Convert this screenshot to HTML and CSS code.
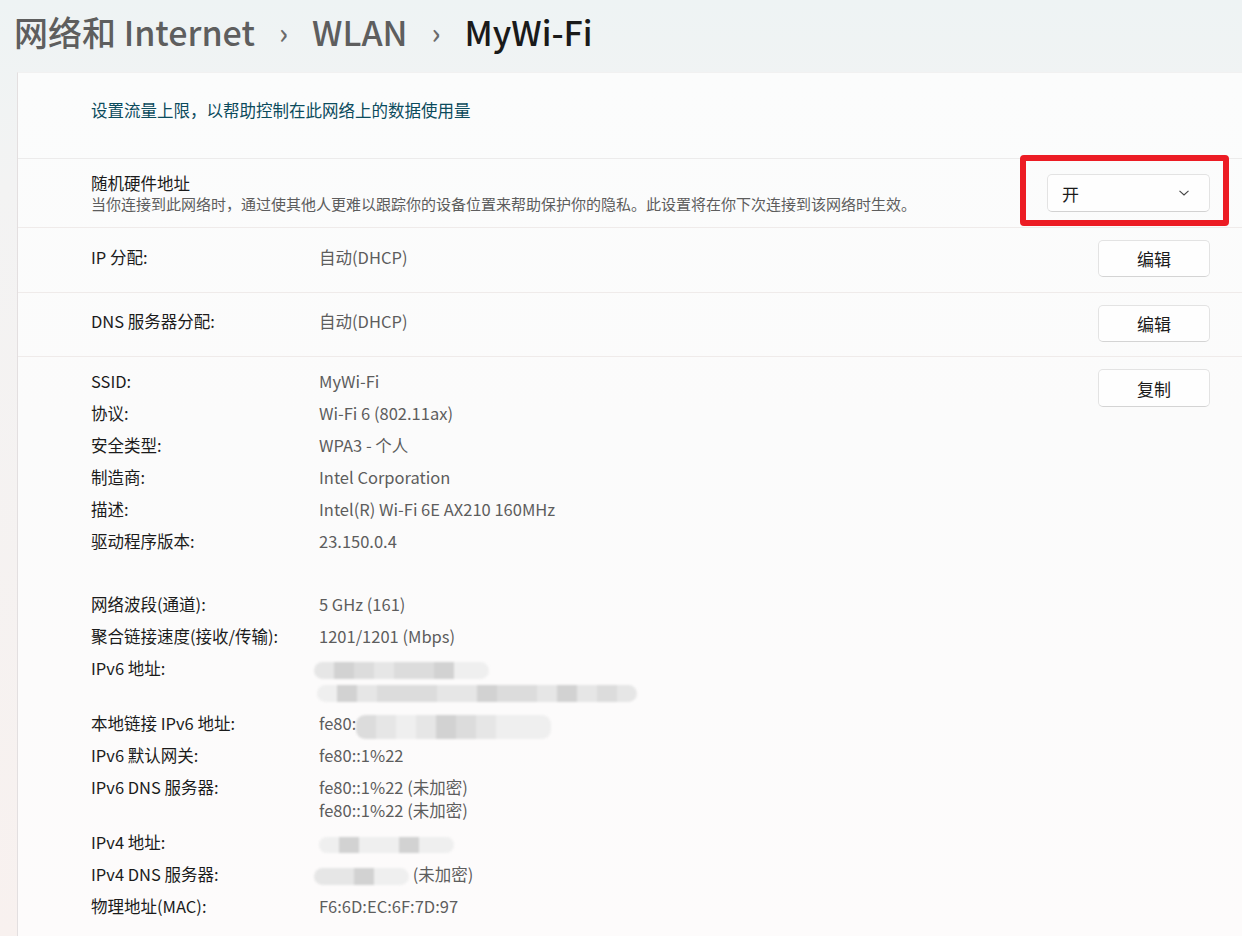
FILE: index.html
```html
<!DOCTYPE html>
<html lang="zh-CN">

<head>
    <meta charset="UTF-8">
    <meta name="viewport" content="width=device-width, initial-scale=1.0">
    <title>MyWi-Fi</title>
    <link rel="stylesheet" href="styles.css">
</head>

<body>
    <div class="wrapper">
        <header class="crumbs">
            <span class="crumb">网络和 Internet</span>
            <span class="sep">›</span>
            <span class="crumb">WLAN</span>
            <span class="sep">›</span>
            <span class="crumb current">MyWi-Fi</span>
        </header>

        <section class="card">
            <div class="limitRow">
                <a class="link">设置流量上限，以帮助控制在此网络上的数据使用量</a>
            </div>

            <div class="row randomRow">
                <div class="rowText">
                    <div class="rowTitle">随机硬件地址</div>
                    <div class="rowDesc">当你连接到此网络时，通过使其他人更难以跟踪你的设备位置来帮助保护你的隐私。此设置将在你下次连接到该网络时生效。</div>
                </div>
                <div class="marked">
                    <div class="select">
                        <span>开</span>
                        <svg class="chevron" width="12" height="8" viewBox="0 0 12 8">
                            <path d="M1.5 1.8 L6 6 L10.5 1.8" fill="none" stroke="#444" stroke-width="1.1" />
                        </svg>
                    </div>
                </div>
            </div>

            <div class="row ipRow">
                <div class="pair">
                    <span class="label">IP 分配:</span>
                    <span class="value">自动(DHCP)</span>
                </div>
                <button class="btn">编辑</button>
            </div>

            <div class="row ipRow">
                <div class="pair">
                    <span class="label">DNS 服务器分配:</span>
                    <span class="value">自动(DHCP)</span>
                </div>
                <button class="btn">编辑</button>
            </div>

            <div class="infoArea">
                <dl class="info">
                    <dt>SSID:</dt>
                    <dd>MyWi-Fi</dd>
                    <dt>协议:</dt>
                    <dd>Wi-Fi 6 (802.11ax)</dd>
                    <dt>安全类型:</dt>
                    <dd>WPA3 - 个人</dd>
                    <dt>制造商:</dt>
                    <dd>Intel Corporation</dd>
                    <dt>描述:</dt>
                    <dd>Intel(R) Wi-Fi 6E AX210 160MHz</dd>
                    <dt>驱动程序版本:</dt>
                    <dd>23.150.0.4</dd>
                    <dt class="blank"></dt>
                    <dd class="blank"></dd>
                    <dt>网络波段(通道):</dt>
                    <dd>5 GHz (161)</dd>
                    <dt>聚合链接速度(接收/传输):</dt>
                    <dd>1201/1201 (Mbps)</dd>
                    <dt>IPv6 地址:</dt>
                    <dd>
                        <div class="line">
                            <span class="mosaic m1">
                                <i class="a"></i><i class="c"></i><i class="b"></i><i class="a"></i><i class="b"></i><i class="b"></i><i class="c"></i><i class="w"></i>
                            </span>
                        </div>
                        <div class="line">
                            <span class="mosaic m2">
                                <i class="w"></i><i class="c"></i><i class="a"></i><i class="b"></i><i class="b"></i><i class="b"></i><i class="a"></i><i class="a"></i><i class="c"></i><i class="b"></i><i class="b"></i><i class="a"></i><i class="c"></i><i class="a"></i><i class="b"></i><i class="a"></i>
                            </span>
                        </div>
                    </dd>
                    <dt>本地链接 IPv6 地址:</dt>
                    <dd class="withBlur">fe80:<span class="mosaic m3"><i class="b"></i><i class="a"></i><i class="w"></i><i class="a"></i><i class="c"></i><i class="b"></i><i class="a"></i><i class="w"></i><i class="w"></i></span></dd>
                    <dt>IPv6 默认网关:</dt>
                    <dd>fe80::1%22</dd>
                    <dt>IPv6 DNS 服务器:</dt>
                    <dd>
                        <div class="line">fe80::1%22 (未加密)</div>
                        <div class="line">fe80::1%22 (未加密)</div>
                    </dd>
                    <dt>IPv4 地址:</dt>
                    <dd><span class="mosaic m4"><i class="w"></i><i class="c"></i><i class="w"></i><i class="w"></i><i class="c"></i><i class="w"></i></span></dd>
                    <dt>IPv4 DNS 服务器:</dt>
                    <dd><span class="mosaic m5"><i class="a"></i><i class="a"></i><i class="c"></i><i class="w"></i></span> (未加密)</dd>
                    <dt>物理地址(MAC):</dt>
                    <dd>F6:6D:EC:6F:7D:97</dd>
                </dl>
                <button class="btn">复制</button>
            </div>
        </section>
    </div>
</body>

</html>
```

FILE: styles.css
```css
* {
    margin: 0;
    padding: 0;
    box-sizing: border-box;
}

body {
    font-family: "Noto Sans CJK SC", "Noto Sans", sans-serif;
    color: #1b1b1b;
    background: linear-gradient(180deg, #eef3f4 0%, #f3f3f3 20%, #f8f1ef 100%);
    overflow: hidden;
}

.wrapper {
    width: 100vw;
    height: 100vh;
}

.crumbs {
    height: 72px;
    padding-left: 14px;
    display: flex;
    align-items: center;
    gap: 18px;
    padding-bottom: 10px;
    font-size: 34px;
    font-weight: 500;
    color: #5e5e5e;
}

.sep {
    font-size: 29px;
    color: #6a6a6a;
    margin: 0 6px;
}

.current {
    color: #1a1a1a;
}

.card {
    margin-left: 17px;
    height: calc(100vh - 72px);
    background: linear-gradient(180deg, #fbfcfc 0%, #fbfbfb 40%, #fdfbfb 100%);
    border-left: 1px solid #e3dfe0;
    border-top: 1px solid #f1f1f1;
}

.limitRow {
    height: 86px;
    padding-left: 73px;
    padding-bottom: 11px;
    display: flex;
    align-items: center;
    border-bottom: 1px solid #ecebeb;
}

.link {
    font-size: 16.5px;
    color: #0b4b5c;
}

.row {
    display: flex;
    align-items: center;
    justify-content: space-between;
    padding: 0 32px 0 73px;
    border-bottom: 1px solid #efebea;
}

.randomRow {
    height: 69px;
}

.rowTitle {
    font-size: 16.5px;
    line-height: 22px;
}

.rowDesc {
    font-size: 15px;
    line-height: 22px;
    color: #5d5d5d;
    margin-top: -1px;
}

.ipRow {
    height: 65px;
    padding-bottom: 3px;
}

.ipRow + .ipRow {
    height: 64px;
}

.pair {
    display: flex;
    font-size: 16.5px;
    margin-top: -4px;
}

.label {
    width: 228px;
}

.value {
    color: #5d5d5d;
}

.btn {
    width: 112px;
    height: 37px;
    border: 1px solid #e3e3e3;
    border-bottom-color: #d4d4d4;
    border-radius: 5px;
    background: #fefefe;
    font-family: inherit;
    font-size: 17px;
    color: #1b1b1b;
}

.marked {
    position: relative;
}

.marked::after {
    content: "";
    position: absolute;
    left: -27px;
    right: -19px;
    top: -19px;
    bottom: -14px;
    border: 6px solid #ec1c24;
    border-radius: 4px;
}

.select {
    width: 163px;
    height: 38px;
    background: #fefefe;
    border: 1px solid #e3e3e3;
    border-bottom-color: #d2d2d2;
    border-radius: 5px;
    display: flex;
    align-items: center;
    justify-content: space-between;
    padding: 0 19px 0 14px;
    font-size: 17px;
}

.infoArea {
    display: flex;
    justify-content: space-between;
    align-items: flex-start;
    padding: 8px 32px 0 73px;
}

.infoArea .btn {
    margin-top: 4px;
    height: 38px;
}

.info {
    display: grid;
    grid-template-columns: 228px 1fr;
    font-size: 16.5px;
    line-height: 32px;
}

.info dd {
    color: #5d5d5d;
}

.info dt.blank,
.info dd.blank {
    height: 31px;
}

.info .line {
    height: 32px;
    line-height: 32px;
}

.info .line + .line {
    height: 23px;
    line-height: 14px;
}

.mosaic {
    display: inline-flex;
    vertical-align: middle;
    border-radius: 9px;
    overflow: hidden;
    filter: blur(0.8px);
}

.mosaic i {
    display: block;
    width: 20px;
    height: 100%;
}

.mosaic .a { background: #e6e6e6; }
.mosaic .b { background: #dcdcdc; }
.mosaic .c { background: #d2d2d2; }
.mosaic .w { background: #efefef; }

.mosaic i.w:last-child { width: 35px; }

.m1 {
    height: 17px;
    margin-left: -5px;
}

.m2 {
    height: 17px;
    margin-left: -2px;
}

.m3 {
    height: 24px;
    margin-top: 2px;
}

.m4 {
    height: 16px;
}

.m5 {
    height: 17px;
    margin-left: -5px;
}
```
